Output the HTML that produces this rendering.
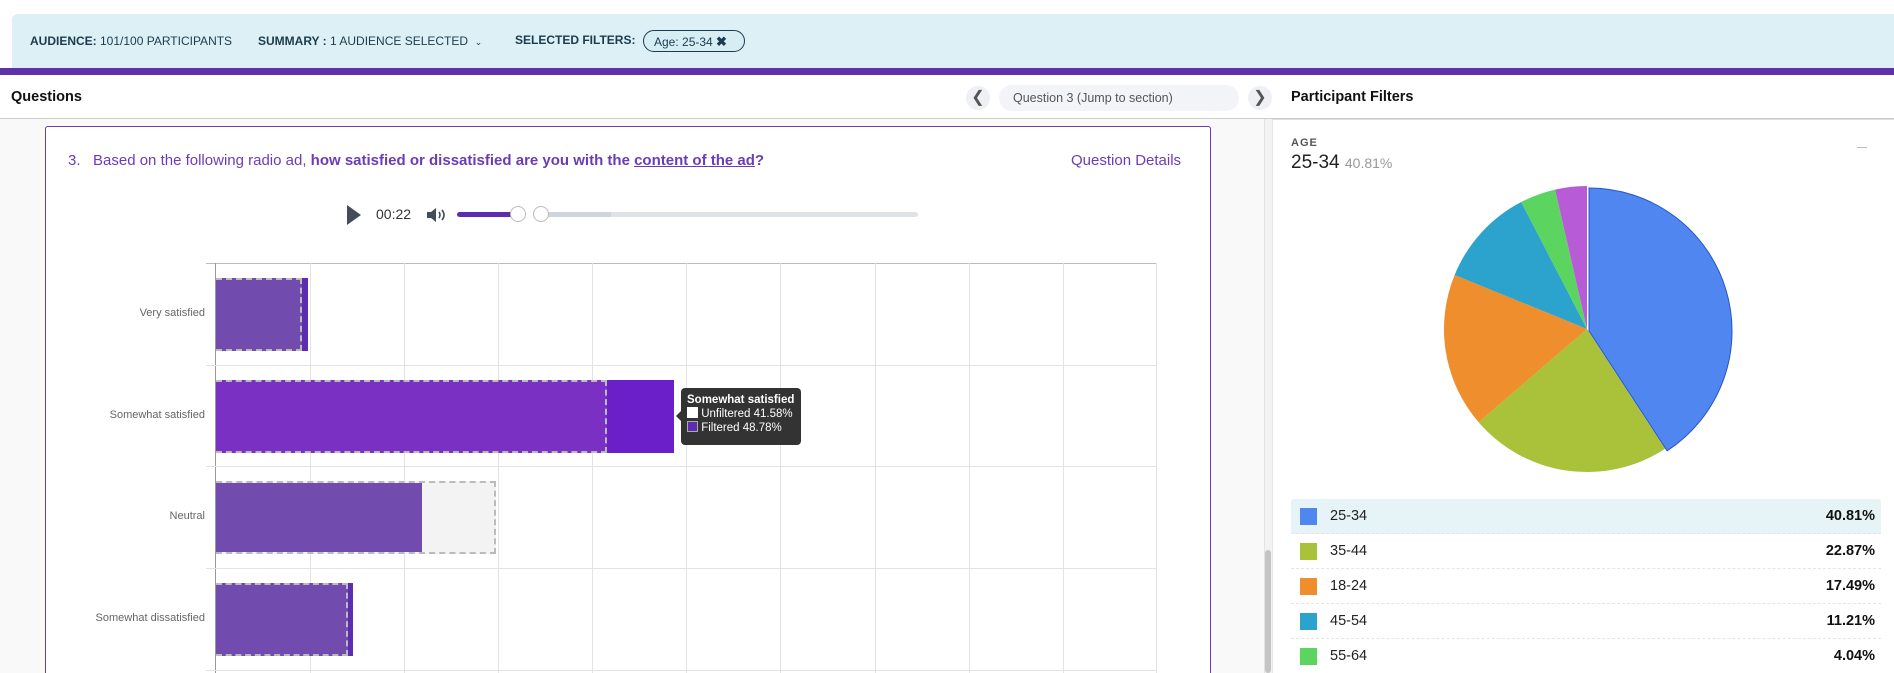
<!DOCTYPE html>
<html style="width:1894px;height:673px;overflow:hidden"><head><meta charset="utf-8"><style>
*{box-sizing:border-box;margin:0;padding:0}
body{width:1894px;height:673px;overflow:hidden;background:#fff;font-family:"Liberation Sans",sans-serif;position:relative}
#wrap{position:absolute;left:0;top:0;width:1894px;height:673px;overflow:hidden}
.a{position:absolute}
.hdr{font-size:12px;color:#1c3b4e;top:34px}
.lbl{font-size:11px;color:#666;text-align:right;width:190px;left:15px}
.vg{position:absolute;top:263px;width:1px;height:410px;background:#e3e3e3}
.hg{position:absolute;left:206px;width:950px;height:1px;background:#e3e3e3}
.row{position:absolute;left:1291px;width:590px;height:35px;border-bottom:1px dashed #e5e5e5;font-size:14.5px;color:#222}
.row .sw{position:absolute;left:9px;top:9px;width:17px;height:17px}
.row .t{position:absolute;left:39px;top:9px}
.row .p{position:absolute;right:6px;top:9px;font-weight:bold;color:#111}
</style></head><body><div id="wrap">
<div class="a" style="left:12px;top:14px;width:1882px;height:55px;background:#dcf0f5;border-radius:6px 0 0 0"></div>
<div class="a" style="left:0;top:68px;width:1894px;height:7px;background:#5e31aa"></div>
<div class="a hdr" style="left:30px"><b>AUDIENCE:</b> 101/100 PARTICIPANTS</div>
<div class="a hdr" style="left:258px"><b>SUMMARY :</b> 1 AUDIENCE SELECTED &nbsp;<span style="font-size:9px">&#8964;</span></div>
<div class="a hdr" style="left:515px;top:33px"><b>SELECTED FILTERS:</b></div>
<div class="a" style="left:643px;top:30px;width:102px;height:22px;border:1px solid #1c3b4e;border-radius:11px;font-size:12px;color:#1c3b4e;padding:3px 0 0 10px;background:#d5edf3">Age: 25-34 <b style="font-size:13px">&#10006;</b></div>

<div class="a" style="left:11px;top:89px;font-size:14.5px;font-weight:bold;color:#111">Questions</div>
<div class="a" style="left:966px;top:86px;width:24px;height:24px;border-radius:12px;background:#eef0f3;color:#555;font-size:16px;text-align:center;line-height:23px">&#10094;</div>
<div class="a" style="left:999px;top:85px;width:240px;height:26px;border-radius:13px;background:#f3f4f7;color:#555;font-size:12.5px;padding:6px 0 0 14px">Question 3 (Jump to section)</div>
<div class="a" style="left:1248px;top:86px;width:24px;height:24px;border-radius:12px;background:#eef0f3;color:#555;font-size:16px;text-align:center;line-height:23px">&#10095;</div>
<div class="a" style="left:1291px;top:89px;font-size:14.5px;font-weight:bold;color:#111">Participant Filters</div>
<div class="a" style="left:0;top:118px;width:1894px;height:1px;background:#ccc"></div>

<div class="a" style="left:0;top:119px;width:1264px;height:554px;background:#f9f9f9"></div>
<div class="a" style="left:1264px;top:119px;width:8px;height:554px;background:#f2f2f2;border-left:1px solid #e3e3e3"></div>
<div class="a" style="left:1265px;top:550px;width:6px;height:123px;background:#c4c4c4;border-radius:3px"></div>
<div class="a" style="left:1272px;top:119px;width:622px;height:554px;background:#fff;border-left:1px solid #e6e6e6;border-top:1px solid #ddd"></div>

<div class="a" style="left:45px;top:126px;width:1166px;height:560px;background:#fff;border:1px solid #6a3db7;border-radius:3px"></div>
<div class="a" style="left:68px;top:152px;font-size:15px;color:#6a3db7"><span>3.</span>&nbsp;&nbsp;&nbsp;Based on the following radio ad, <b>how satisfied or dissatisfied are you with the <u>content of the ad</u>?</b></div>
<div class="a" style="left:1071px;top:152px;font-size:15px;color:#6a3db7">Question Details</div>

<svg class="a" style="left:345px;top:204px" width="20" height="22"><path d="M2 1 L16 11 L2 21 Z" fill="#444c5a"/></svg>
<div class="a" style="left:376px;top:206px;font-size:14px;color:#333">00:22</div>
<svg class="a" style="left:426px;top:206px" width="22" height="18"><path d="M1 6 H5 L10 2 V16 L5 12 H1 Z" fill="#444c5a"/><path d="M13 6 Q15 9 13 12 M16 4 Q20 9 16 14" stroke="#444c5a" stroke-width="1.6" fill="none"/></svg>
<div class="a" style="left:457px;top:212px;width:62px;height:5px;border-radius:3px;background:#5d2db0"></div>
<div class="a" style="left:510px;top:206px;width:16px;height:16px;border-radius:8px;background:#fff;border:1px solid #bbb"></div>
<div class="a" style="left:541px;top:212px;width:377px;height:5px;border-radius:3px;background:#dfe3e8"></div>
<div class="a" style="left:541px;top:212px;width:70px;height:5px;background:#cfd5dc"></div>
<div class="a" style="left:533px;top:206px;width:16px;height:16px;border-radius:8px;background:#fff;border:1px solid #bbb"></div>

<div class="a" style="left:206px;top:263px;width:950px;height:1px;background:#bbb"></div>
<div class="a" style="left:215px;top:263px;width:1px;height:410px;background:#999"></div>
<div class="vg" style="left:310px"></div><div class="vg" style="left:404px"></div><div class="vg" style="left:498px"></div><div class="vg" style="left:592px"></div><div class="vg" style="left:686px"></div><div class="vg" style="left:780px"></div><div class="vg" style="left:875px"></div><div class="vg" style="left:969px"></div><div class="vg" style="left:1063px"></div><div class="vg" style="left:1156px"></div>
<div class="hg" style="top:365px"></div><div class="hg" style="top:466px"></div><div class="hg" style="top:568px"></div><div class="hg" style="top:670px"></div>

<div class="a lbl" style="top:307px">Very satisfied</div>
<div class="a lbl" style="top:409px">Somewhat satisfied</div>
<div class="a lbl" style="top:510px">Neutral</div>
<div class="a lbl" style="top:612px">Somewhat dissatisfied</div>

<div class="a" style="left:216px;top:278px;width:92px;height:73px;background:#5e2cb0"></div>
<div class="a" style="left:216px;top:278px;width:86px;height:73px;background:#714bae;border:2.5px dashed #bbb;border-left:none"></div>

<div class="a" style="left:216px;top:380px;width:458px;height:73px;background:#6a1fc8"></div>
<div class="a" style="left:216px;top:380px;width:391px;height:73px;background:#7a30c2;border:2.5px dashed #bbb;border-left:none"></div>

<div class="a" style="left:216px;top:481px;width:280px;height:73px;background:#f3f3f3;border:2.5px dashed #bbb;border-left:none"></div>
<div class="a" style="left:216px;top:483px;width:206px;height:69px;background:#714bae"></div>

<div class="a" style="left:216px;top:583px;width:137px;height:73px;background:#5e2cb0"></div>
<div class="a" style="left:216px;top:583px;width:132px;height:73px;background:#714bae;border:2.5px dashed #bbb;border-left:none"></div>

<div class="a" style="left:681px;top:388px;width:120px;height:57px;background:#333;border-radius:4px;color:#fff;font-size:11.5px;padding:5px 0 0 6px;line-height:14px">
<b>Somewhat satisfied</b><br>
<span style="display:inline-block;width:11px;height:11px;background:#fff;vertical-align:-1px"></span> Unfiltered 41.58%<br>
<span style="display:inline-block;width:11px;height:11px;background:#5e2cb0;border:1px solid #aaa;vertical-align:-1px"></span> Filtered 48.78%
</div>
<div class="a" style="left:676px;top:411px;width:0;height:0;border-top:5px solid transparent;border-bottom:5px solid transparent;border-right:5px solid #333"></div>

<div class="a" style="left:1291px;top:137px;font-size:11px;font-weight:bold;color:#555;letter-spacing:1px">AGE</div>
<div class="a" style="left:1291px;top:152px;font-size:19px;color:#222">25-34 <span style="font-size:14px;color:#999">40.81%</span></div>
<div class="a" style="left:1857px;top:147px;width:10px;height:1px;background:#bbb"></div>

<svg class="a" style="left:0;top:0" width="1894" height="673">
<path d="M1587 329 L1665.1 448.8 A143 143 0 0 1 1478.6 422.3 Z" fill="#a9c23a"/>
<path d="M1587 329 L1478.6 422.3 A143 143 0 0 1 1454.6 275 Z" fill="#ee8e2d"/>
<path d="M1587 329 L1454.6 275 A143 143 0 0 1 1521.2 202 Z" fill="#2ba3cc"/>
<path d="M1587 329 L1521.2 202 A143 143 0 0 1 1555.1 189.6 Z" fill="#5bd55f"/>
<path d="M1587 329 L1555.1 189.6 A143 143 0 0 1 1587 186 Z" fill="#b85bd6"/>
<path transform="translate(2,2)" d="M1587 329 L1587 186 A143 143 0 0 1 1665.1 448.8 Z" fill="#4f86f0" stroke="#2a55c0" stroke-width="1"/>
</svg>

<div class="a" style="left:1291px;top:499px;width:590px;height:35px;background:#e6f3f7;border-radius:3px"></div>
<div class="row" style="top:499px"><div class="sw" style="background:#4f86f0"></div><div class="t">25-34</div><div class="p">40.81%</div></div>
<div class="row" style="top:534px"><div class="sw" style="background:#a9c23a"></div><div class="t">35-44</div><div class="p">22.87%</div></div>
<div class="row" style="top:569px"><div class="sw" style="background:#ee8e2d"></div><div class="t">18-24</div><div class="p">17.49%</div></div>
<div class="row" style="top:604px"><div class="sw" style="background:#2ba3cc"></div><div class="t">45-54</div><div class="p">11.21%</div></div>
<div class="row" style="top:639px;border:none"><div class="sw" style="background:#5bd55f"></div><div class="t">55-64</div><div class="p">4.04%</div></div>
</div></body></html>
